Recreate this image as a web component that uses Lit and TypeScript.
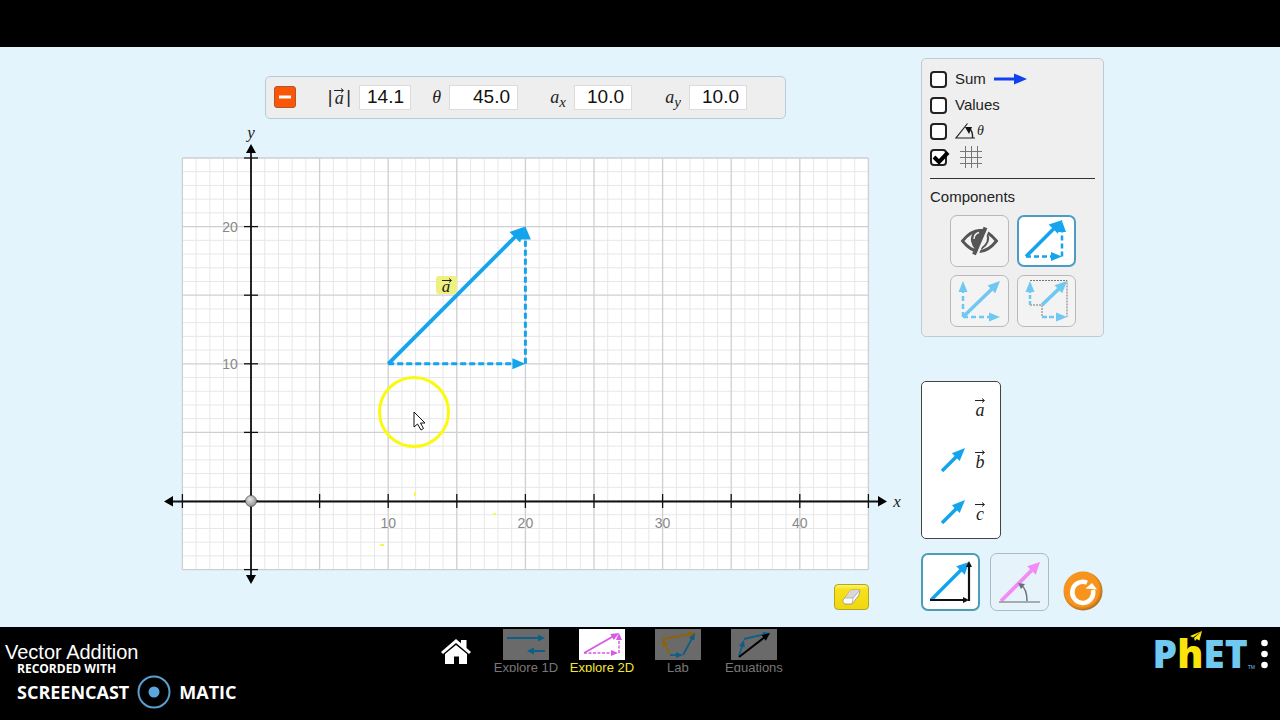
import { LitElement, html, svg, css, nothing } from "lit";
import { customElement, state } from "lit/decorators.js";
import { classMap } from "lit/directives/class-map.js";

const BLUE = "#14a4ee";
const PALE = "#6fc8f2";
const UNIT = 13.72;

interface ArrowStyle {
  color: string;
  width?: number;
  headWidth?: number;
  headLength?: number;
  dash?: string;
}

/* A straight arrow: a (possibly dashed) shaft and a solid triangular head. */
const arrow = (x1: number, y1: number, x2: number, y2: number, s: ArrowStyle) => {
  const { color, width = 3, headWidth = 9, headLength = 9, dash } = s;
  const len = Math.hypot(x2 - x1, y2 - y1);
  const ux = (x2 - x1) / len;
  const uy = (y2 - y1) / len;
  const bx = x2 - ux * headLength;
  const by = y2 - uy * headLength;
  const h = headWidth / 2;
  return svg`
    <line x1=${x1} y1=${y1} x2=${bx + ux} y2=${by + uy} stroke=${color} stroke-width=${width}
      stroke-dasharray=${dash ?? nothing}></line>
    <polygon fill=${color}
      points="${x2},${y2} ${bx - uy * h},${by + ux * h} ${bx + uy * h},${by - ux * h}"></polygon>`;
};

const range = (from: number, to: number, step = 1) =>
  Array.from({ length: Math.floor((to - from) / step) + 1 }, (_, i) => from + i * step);

const vectorSymbol = (letter: string) => html`
  <span class="vec">
    <svg width="10" height="5" viewBox="0 0 10 5" aria-hidden="true">
      <path d="M0 2.5H9M7 .5L9.5 2.5L7 4.5" fill="none" stroke="#222" stroke-width="1"></path>
    </svg>
    <i>${letter}</i>
  </span>`;

const componentIcons = [
  {
    id: "invisible",
    label: "Hide components",
    icon: svg`
      <g fill="none" stroke="#555" stroke-linecap="butt">
        <path d="M12.500 26Q29.500 5 46.500 26Q29.500 47 12.500 26Z" stroke-width="2.800"></path>
        <path d="M37 19Q41 27 31 34" stroke-width="2"></path>
      </g>
      <path d="M35 14C25 13 20 19 21 26Q22 31 25 34Z" fill="#555"></path>
      <path d="M24 24Q24 19 29 17.500" fill="none" stroke="#f3f3f3" stroke-width="1.400"></path>
      <line x1="38.500" y1="13" x2="27.500" y2="39" stroke="#f3f3f3" stroke-width="2.500"></line>
      <line x1="35.500" y1="12.500" x2="24" y2="39.500" stroke="#555" stroke-width="4"></line>`,
  },
  {
    id: "triangle",
    label: "Triangle components",
    icon: svg`
      ${arrow(9, 41.5, 45, 41.5, { color: BLUE, width: 2.5, headLength: 11, dash: "5 3" })}
      ${arrow(45, 41.5, 45, 6, { color: BLUE, width: 2.5, headLength: 11, headWidth: 8, dash: "5 3" })}
      ${arrow(9, 41.5, 45.5, 5, { color: BLUE, width: 3.5, headLength: 13, headWidth: 13 })}`,
  },
  {
    id: "parallelogram",
    label: "Components at the tail",
    icon: svg`
      ${arrow(13, 42, 13, 6, { color: PALE, width: 2.5, headLength: 11, dash: "5 3" })}
      ${arrow(13, 42, 50, 42, { color: PALE, width: 2.5, headLength: 11, dash: "5 3" })}
      ${arrow(13, 42, 50, 6, { color: PALE, width: 3.5, headLength: 12, headWidth: 11 })}`,
  },
  {
    id: "projection",
    label: "Components on the axes",
    icon: svg`
      <path d="M13 5.500H50V42M13 30H25V42" fill="none" stroke="#777" stroke-width="1" stroke-dasharray="2 1"></path>
      ${arrow(13, 30, 13, 6, { color: PALE, width: 2.5, headLength: 11, dash: "4 2" })}
      ${arrow(25, 42, 50, 42, { color: PALE, width: 2.5, headLength: 11, dash: "5 2" })}
      ${arrow(25, 30, 50, 6, { color: PALE, width: 3.5, headLength: 12, headWidth: 11 })}`,
  },
];

const sceneIcons = [
  {
    id: "cartesian",
    label: "Cartesian scene",
    icon: svg`
      ${arrow(10, 47, 48, 9, { color: BLUE, width: 3.5, headLength: 12, headWidth: 12 })}
      ${arrow(9, 47, 48, 47, { color: "#111", width: 2.2, headLength: 6, headWidth: 6 })}
      ${arrow(48, 48, 48, 8, { color: "#111", width: 2.2, headLength: 6, headWidth: 6 })}`,
  },
  {
    id: "polar",
    label: "Polar scene",
    icon: svg`
      ${arrow(11, 48, 50, 9, { color: "#f08cf5", width: 3.8, headLength: 12, headWidth: 12 })}
      <path d="M9 49H50" stroke="#8d939b" stroke-width="1.500"></path>
      <path d="M37 48Q37 36 31 32" fill="none" stroke="#6b7078" stroke-width="1.500"></path>
      <path d="M28 30L35 31L31 36Z" fill="#6b7078"></path>`,
  },
];

const screens = [
  {
    name: "Explore 1D",
    icon: svg`
      ${arrow(4, 9, 42, 9, { color: "#0e5f86", width: 2, headLength: 7, headWidth: 7 })}
      ${arrow(42, 22, 24, 22, { color: "#0e5f86", width: 2, headLength: 7, headWidth: 7 })}`,
  },
  {
    name: "Explore 2D",
    icon: svg`
      ${arrow(5, 24, 39, 24, { color: "#d958e6", width: 1.5, headLength: 7, headWidth: 6, dash: "3 1.5" })}
      ${arrow(40, 24, 40, 4, { color: "#d958e6", width: 1.5, headLength: 7, headWidth: 6, dash: "3 1.5" })}
      ${arrow(5, 24, 40, 4, { color: "#d958e6", width: 1.8, headLength: 8, headWidth: 7 })}`,
  },
  {
    name: "Lab",
    icon: svg`
      ${arrow(8, 10, 41, 4, { color: "#8f6208", width: 1.8, headLength: 7, headWidth: 6 })}
      ${arrow(15, 25, 7, 10, { color: "#8f6208", width: 1.8, headLength: 7, headWidth: 6 })}
      ${arrow(15, 26, 28, 26, { color: "#0e5f86", width: 1.8, headLength: 7, headWidth: 6 })}
      ${arrow(28, 26, 40, 4, { color: "#0e5f86", width: 1.8, headLength: 7, headWidth: 6 })}`,
  },
  {
    name: "Equations",
    icon: svg`
      ${arrow(13, 10, 39, 4, { color: "#0e5f86", width: 1.8, headLength: 7, headWidth: 6 })}
      ${arrow(8, 27, 13, 11, { color: "#0e5f86", width: 1.8, headLength: 7, headWidth: 6 })}
      ${arrow(8, 28, 39, 4, { color: "#000", width: 2, headLength: 8, headWidth: 7 })}`,
  },
];

@customElement("app-root")
export class AppRoot extends LitElement {
  @state() private component = "triangle";
  @state() private scene = "cartesian";

  static styles = css`
    :host {
      display: flex;
      flex-direction: column;
      min-height: 100vh;
      background: #000;
      color: #222;
      font: 15px/20px "Liberation Sans", Arial, sans-serif;
    }
    * { box-sizing: border-box; }
    svg { display: block; flex: none; }
    button { padding: 0; margin: 0; color: inherit; font: inherit; cursor: pointer; }
    i, .math { font-family: "Liberation Serif", "Times New Roman", serif; font-style: italic; }

    .sim {
      flex: 1;
      display: flex;
      justify-content: center;
      gap: 16px;
      margin-top: 47px;
      padding: 11px 13px 16px 0;
      background: #e3f4fd;
    }
    .stage { display: flex; flex-direction: column; width: 742px; padding-top: 18px; }

    .readout {
      display: grid;
      grid-template-columns: 22px 115px 107px 114px 115px;
      align-items: center;
      align-self: flex-start;
      width: 521px;
      height: 43px;
      margin-left: 102px;
      padding: 0 0 1px 8px;
      border: 1px solid #b7cbd9;
      border-radius: 5px;
      background: #eeeeee;
    }
    .minus {
      display: grid;
      place-items: center;
      width: 22px;
      height: 22px;
      border: 1px solid #b5532a;
      border-radius: 3px;
      background: #fb5607;
    }
    .field { display: flex; align-items: center; justify-content: flex-end; gap: 8px; }
    .field label { display: flex; align-items: center; font-size: 18px; }
    .field label i { font-size: 18px; }
    .field input {
      width: 58px;
      height: 25px;
      padding: 0 7px;
      border: 1px solid #dcdcdc;
      background: #fff;
      color: #111;
      font: 19px "Liberation Sans", Arial, sans-serif;
      text-align: right;
    }
    .field.magnitude input { width: 52px; padding: 0 6px; }
    .field.angle input { width: 69px; }
    .field.magnitude .vec { margin: 0 2px; }
    sub { font-size: 15px; line-height: 0; vertical-align: -4px; }

    .vec { display: inline-flex; flex-direction: column; align-items: center; padding-bottom: 3px; }
    .vec i { font-size: 18px; line-height: 11px; }
    .palette .vec { padding-bottom: 1px; }
    .palette .vec i { line-height: 14px; }

    .graph { width: 742px; height: 465px; overflow: visible; }
    .tick-label { font: 14px "Liberation Sans", Arial, sans-serif; fill: #888; text-anchor: middle; }
    .axis-label { font: italic 17px "Liberation Serif", serif; fill: #222; text-anchor: middle; }

    .eraser {
      display: grid;
      place-items: center;
      align-self: flex-end;
      width: 35px;
      height: 26px;
      margin-right: 36px;
      border: 1px solid #b5a521;
      border-radius: 4px;
      background: linear-gradient(#fff36a, #f7e11a 20%, #f0d80f);
    }

    .controls { width: 183px; }
    .panel {
      padding: 7px 8px 9px;
      border: 1px solid #bccbd6;
      border-radius: 5px;
      background: #efeff0;
    }
    .option { display: flex; align-items: center; height: 26px; gap: 8px; }
    .box { position: relative; width: 17px; height: 17px; }
    .box input {
      appearance: none;
      display: block;
      width: 17px;
      height: 17px;
      margin: 0;
      border: 2px solid #222;
      border-radius: 4px;
      background: #fff;
    }
    .box svg { position: absolute; left: 2px; top: 1px; display: none; pointer-events: none; }
    .box input:checked + svg { display: block; }
    .option label { display: flex; align-items: center; gap: 8px; }
    .option .math { font-size: 14px; margin-left: -6px; }
    .option .grid-icon { margin-left: 5px; }
    hr { height: 1px; margin: 8px 0; border: 0; background: #333; }
    h2 { margin: 0 0 8px; font-size: 15px; font-weight: 400; line-height: 20px; }
    .choices {
      display: grid;
      grid-template-columns: 59px 59px;
      gap: 8px;
      justify-content: center;
      padding-left: 1px;
    }
    .choice {
      height: 52px;
      border: 1px solid #b9b9b9;
      border-radius: 7px;
      background: #f3f3f3;
    }
    .choice svg { margin: -1px; }
    .choice.on { border: 2px solid #4b9dc6; background: #fff; }
    .choice.on svg { margin: -2px; }

    .palette {
      display: grid;
      grid-template-rows: repeat(3, 52px);
      width: 80px;
      margin: 44px 0 14px;
      border: 1px solid #444;
      border-radius: 5px;
      background: #fff;
    }
    .palette-row {
      display: grid;
      grid-template-columns: 24px 10px;
      gap: 10px;
      align-items: center;
      justify-content: end;
      padding-right: 15px;
      border: 0;
      background: none;
    }
    .scenes { display: flex; align-items: flex-end; gap: 10px; }
    .scene {
      width: 59px;
      height: 58px;
      border: 1px solid #a9bcc6;
      border-radius: 7px;
      background: #e6f3fb;
    }
    .scene svg { margin: -1px; }
    .scene.on { border: 2px solid #4f9db5; background: #fff; }
    .scene.on svg { margin: -2px; }
    .reset { margin-left: 4px; border: 0; background: none; }

    footer {
      display: grid;
      grid-template-columns: 440fr auto 487fr;
      height: 93px;
      color: #fff;
    }
    .title { padding: 14px 0 0 5px; font-size: 20px; line-height: 22px; }
    .mark { padding-left: 17px; font: 700 12px/12px "Open Sans", "Noto Sans", sans-serif; }
    .mark-row { display: flex; align-items: center; gap: 8px; font-size: 18px; height: 34px; }
    nav { display: flex; align-items: flex-start; gap: 17px; }
    .home { margin-top: 11px; border: 0; background: none; }
    .screens { display: flex; height: 45px; overflow: hidden; }
    .screen {
      display: flex;
      flex-direction: column;
      align-items: center;
      width: 76px;
      padding: 2px 0 0;
      border: 0;
      background: none;
      color: #777;
      font-size: 13px;
      line-height: 16px;
      white-space: nowrap;
    }
    .screen svg { background: #6a6a6a; }
    .screen.on { color: #f5e636; }
    .screen.on svg { background: #fff; }
    .brand { display: flex; justify-content: flex-end; gap: 6px; padding: 7px 12px 0 0; }
    .logo {
      position: relative;
      display: flex;
      align-items: flex-start;
      height: 40px;
      color: #6fc9f0;
      font: 800 39px/38px "Open Sans", sans-serif;
      text-decoration: none;
    }
    .logo .h { color: #fbe40b; }
    .logo svg { position: absolute; left: 37px; top: -3px; }
    .logo small { align-self: flex-end; font: 5px/6px "Liberation Sans", sans-serif; margin-bottom: 4px; }
    .more { align-self: flex-start; margin-top: 5px; border: 0; background: none; }
  `;

  private graph() {
    const px = (v: number) => v * UNIT;
    const minorX = range(-5, 45).filter((v) => v % 5);
    const minorY = range(-5, 25).filter((v) => v % 5);
    const majorX = range(-5, 45, 5);
    const majorY = range(-5, 25, 5);
    const left = px(-5), right = px(45), top = px(-25), bottom = px(5);
    return html`
      <svg class="graph" viewBox="-88 -382 742 465" role="img" aria-label="Graph of vector a">
        <rect x=${left} y=${top} width=${right - left} height=${bottom - top} fill="#fff"></rect>
        <g stroke="#e7e7e7" stroke-width="1">
          ${minorX.map((v) => svg`<line x1=${px(v)} x2=${px(v)} y1=${top} y2=${bottom}></line>`)}
          ${minorY.map((v) => svg`<line x1=${left} x2=${right} y1=${px(-v)} y2=${px(-v)}></line>`)}
        </g>
        <g stroke="#cfcfd3" stroke-width="1.300">
          ${majorX.map((v) => svg`<line x1=${px(v)} x2=${px(v)} y1=${top} y2=${bottom}></line>`)}
          ${majorY.map((v) => svg`<line x1=${left} x2=${right} y1=${px(-v)} y2=${px(-v)}></line>`)}
        </g>
        <g stroke="#111" stroke-width="1.800">
          <line x1="-80" x2="628" y1="0.500" y2="0.500"></line>
          <line x1="0" x2="0" y1="-350" y2="76"></line>
        </g>
        <g stroke="#111" stroke-width="1.300">
          ${majorX.map((v) => svg`<line x1=${px(v)} x2=${px(v)} y1="-7" y2="7"></line>`)}
          ${majorY.map((v) => svg`<line x1="-7" x2="7" y1=${px(-v)} y2=${px(-v)}></line>`)}
        </g>
        <path fill="#000" d="M-87 0.500L-78 -5V5.500ZM636 0.500L627 -5V5.500ZM0 -357L-5 -348H5ZM0 83L-5 74H5Z"></path>
        <radialGradient id="knob" cx=".4" cy=".35" r=".7">
          <stop offset="0" stop-color="#e8e8e8"></stop>
          <stop offset="1" stop-color="#8a8a8a"></stop>
        </radialGradient>
        <circle r="5.500" fill="url(#knob)" stroke="#555" stroke-width=".8"></circle>
        ${[10, 20, 30, 40].map((v) => svg`<text class="tick-label" x=${px(v)} y="27">${v}</text>`)}
        ${[10, 20].map((v) => svg`<text class="tick-label" x="-21" y=${px(-v) + 5}>${v}</text>`)}
        <text class="axis-label" x="0" y="-363">y</text>
        <text class="axis-label" x="646" y="6">x</text>

        ${arrow(px(10), px(-10), px(20), px(-10), { color: BLUE, headLength: 13, headWidth: 11, dash: "6 3" })}
        ${arrow(px(20), px(-10), px(20), px(-20), { color: BLUE, headLength: 13, headWidth: 11, dash: "6 3" })}
        ${arrow(px(10), px(-10), px(20), px(-20), { color: BLUE, width: 3.8, headLength: 15, headWidth: 15 })}

        <rect x="185" y="-225" width="21" height="18" rx="3" fill="#eef07f"></rect>
        <path d="M191 -220.500H200M198 -222.500L200.500 -220.500L198 -218.500" fill="none" stroke="#222"></path>
        <text class="axis-label" x="195" y="-209">a</text>

        <circle cx="163" cy="-89" r="34.500" fill="none" stroke="#fafa10" stroke-width="3"></circle>
        <path d="M163 -89V-74L166.500 -77L170 -71L172.500 -72.500L169.500 -78H174Z" fill="#fff" stroke="#111" stroke-width="1"></path>
        <path d="M164 -9V-5M242 13H245M129 44H133" stroke="#f6f650" stroke-width="2"></path>
      </svg>`;
  }

  private field(id: string, kind: string, name: string, label: unknown, value: string) {
    return html`
      <div class="field ${kind}">
        <label for=${id} aria-label=${name}>${label}</label>
        <input id=${id} readonly .value=${value} />
      </div>`;
  }

  private option(id: string, label: unknown, checked = false) {
    return html`
      <div class="option">
        <span class="box">
          <input type="checkbox" id=${id} .checked=${checked} />
          <svg width="18" height="15" viewBox="0 0 18 15" aria-hidden="true">
            <path d="M2 7L7 12L16 2.500" fill="none" stroke="#000" stroke-width="4"></path>
          </svg>
        </span>
        <label for=${id}>${label}</label>
      </div>`;
  }

  render() {
    return html`
      <main class="sim">
        <section class="stage">
          <div class="readout">
            <button class="minus" aria-label="Collapse">
              <svg width="12" height="4" viewBox="0 0 12 4"><path d="M0 2H12" stroke="#fff" stroke-width="3"></path></svg>
            </button>
            ${this.field("mag", "magnitude", "magnitude", html`|${vectorSymbol("a")}|`, "14.1")}
            ${this.field("ang", "angle", "angle", html`<i>θ</i>`, "45.0")}
            ${this.field("ax", "", "x component", html`<span class="math">a<sub>x</sub></span>`, "10.0")}
            ${this.field("ay", "", "y component", html`<span class="math">a<sub>y</sub></span>`, "10.0")}
          </div>
          ${this.graph()}
          <button class="eraser" aria-label="Erase">
            <svg width="20" height="18" viewBox="0 0 20 18">
              <path d="M1 12L9 2H18L17 7L10 16H3Q0 15 1 12Z" fill="#fff" stroke="#8f8f80" stroke-width=".8"></path>
              <path d="M5 7L9 2H18L12 10H4Z" fill="#ddd6d8"></path>
              <path d="M3 10H11L18 2M11 10L10 16" fill="none" stroke="#aaa" stroke-width=".8"></path>
            </svg>
          </button>
        </section>

        <aside class="controls">
          <div class="panel">
            ${this.option("sum", html`Sum
              <svg width="33" height="12" viewBox="0 0 33 12">
                ${arrow(0, 6, 33, 6, { color: "#1140f0", width: 3, headLength: 13, headWidth: 11 })}
              </svg>`)}
            ${this.option("values", "Values")}
            ${this.option("angles", html`
              <svg width="20" height="16" viewBox="0 0 20 16" aria-hidden="true">
                <path d="M12.500 .500L1 15H20" fill="none" stroke="#222" stroke-width="1.200"></path>
                <path d="M17.500 15Q18 8 14 5" fill="none" stroke="#222" stroke-width="1.400"></path>
                <path d="M10 4L17 4L14 11Z" fill="#111"></path>
              </svg>
              <span class="math">θ</span>`)}
            ${this.option("grid", html`
              <svg class="grid-icon" width="22" height="22" viewBox="0 0 22 22" role="img" aria-label="Grid">
                <path d="M0 5.500H22M0 11.500H22M0 17.500H22M5.500 0V22M11.500 0V22M17.500 0V22" stroke="#777" stroke-width="1"></path>
              </svg>`, true)}
            <hr />
            <h2>Components</h2>
            <div class="choices">
              ${componentIcons.map((c) => html`
                <button class=${classMap({ choice: true, on: c.id === this.component })}
                  aria-label=${c.label} @click=${() => (this.component = c.id)}>
                  <svg width="58" height="52" viewBox="0 0 58 52">${c.icon}</svg>
                </button>`)}
            </div>
          </div>

          <div class="palette">
            ${["a", "b", "c"].map((letter) => html`
              <button class="palette-row" aria-label="Vector ${letter}">
                <svg width="24" height="24" viewBox="0 0 24 24">
                  ${letter === "a" ? nothing : arrow(1, 23, 24, 0, { color: BLUE, width: 3.5, headLength: 13, headWidth: 11 })}
                </svg>
                ${vectorSymbol(letter)}
              </button>`)}
          </div>

          <div class="scenes">
            ${sceneIcons.map((s) => html`
              <button class=${classMap({ scene: true, on: s.id === this.scene })}
                aria-label=${s.label} @click=${() => (this.scene = s.id)}>
                <svg width="58" height="58" viewBox="0 0 58 58">${s.icon}</svg>
              </button>`)}
            <button class="reset" aria-label="Reset all">
              <svg width="40" height="40" viewBox="0 0 40 40">
                <radialGradient id="orange" cx=".47" cy=".46" r=".54">
                  <stop offset=".82" stop-color="#f7941d"></stop>
                  <stop offset="1" stop-color="#b06a1c"></stop>
                </radialGradient>
                <circle cx="20" cy="20" r="19.500" fill="url(#orange)"></circle>
                <path d="M24 11.800A10.500 10.500 0 1 0 30 19" fill="none" stroke="#fff" stroke-width="4.500"></path>
                <path d="M22.500 17.500L29 12L34 18.500Z" fill="#fff"></path>
              </svg>
            </button>
          </div>
        </aside>
      </main>

      <footer>
        <div>
          <div class="title">Vector Addition</div>
          <div class="mark">
            RECORDED WITH
            <div class="mark-row">
              <span>SCREENCAST</span>
              <svg width="34" height="34" viewBox="0 0 34 34" aria-hidden="true">
                <circle cx="17" cy="17" r="15.500" fill="none" stroke="#5a9fd0" stroke-width="2"></circle>
                <circle cx="17" cy="17" r="5.500" fill="#5ba6dc"></circle>
              </svg>
              <span>MATIC</span>
            </div>
          </div>
        </div>
        <nav>
          <button class="home" aria-label="Home">
            <svg width="30" height="27" viewBox="0 0 30 27">
              <path d="M0 14L15 1L20 5.300V2H25.500V10L30 14L28 16L15 5L2 16Z" fill="#fff"></path>
              <path d="M4 16L15 7L26 16V26H18V18.500H13V26H4Z" fill="#fff"></path>
            </svg>
          </button>
          <div class="screens">
            ${screens.map((s) => html`
              <button class=${classMap({ screen: true, on: s.name === "Explore 2D" })}>
                <svg width="46" height="31" viewBox="0 0 46 31">${s.icon}</svg>
                ${s.name}
              </button>`)}
          </div>
        </nav>
        <div class="brand">
          <a class="logo" href="#">P<span class="h">h</span>ET<svg width="13" height="11" viewBox="0 0 13 11" aria-hidden="true">
              <path d="M12 0L0 5L3 6.500ZM12 0L4 7L5 10L6.500 8L9.500 9.500Z" fill="#fbe40b"></path>
            </svg><small>TM</small></a>
          <button class="more" aria-label="Menu">
            <svg width="7" height="30" viewBox="0 0 7 30">
              <g fill="#fff"><circle cx="3.500" cy="4" r="3.300"></circle><circle cx="3.500" cy="15" r="3.300"></circle><circle cx="3.500" cy="26" r="3.300"></circle></g>
            </svg>
          </button>
        </div>
      </footer>`;
  }
}
